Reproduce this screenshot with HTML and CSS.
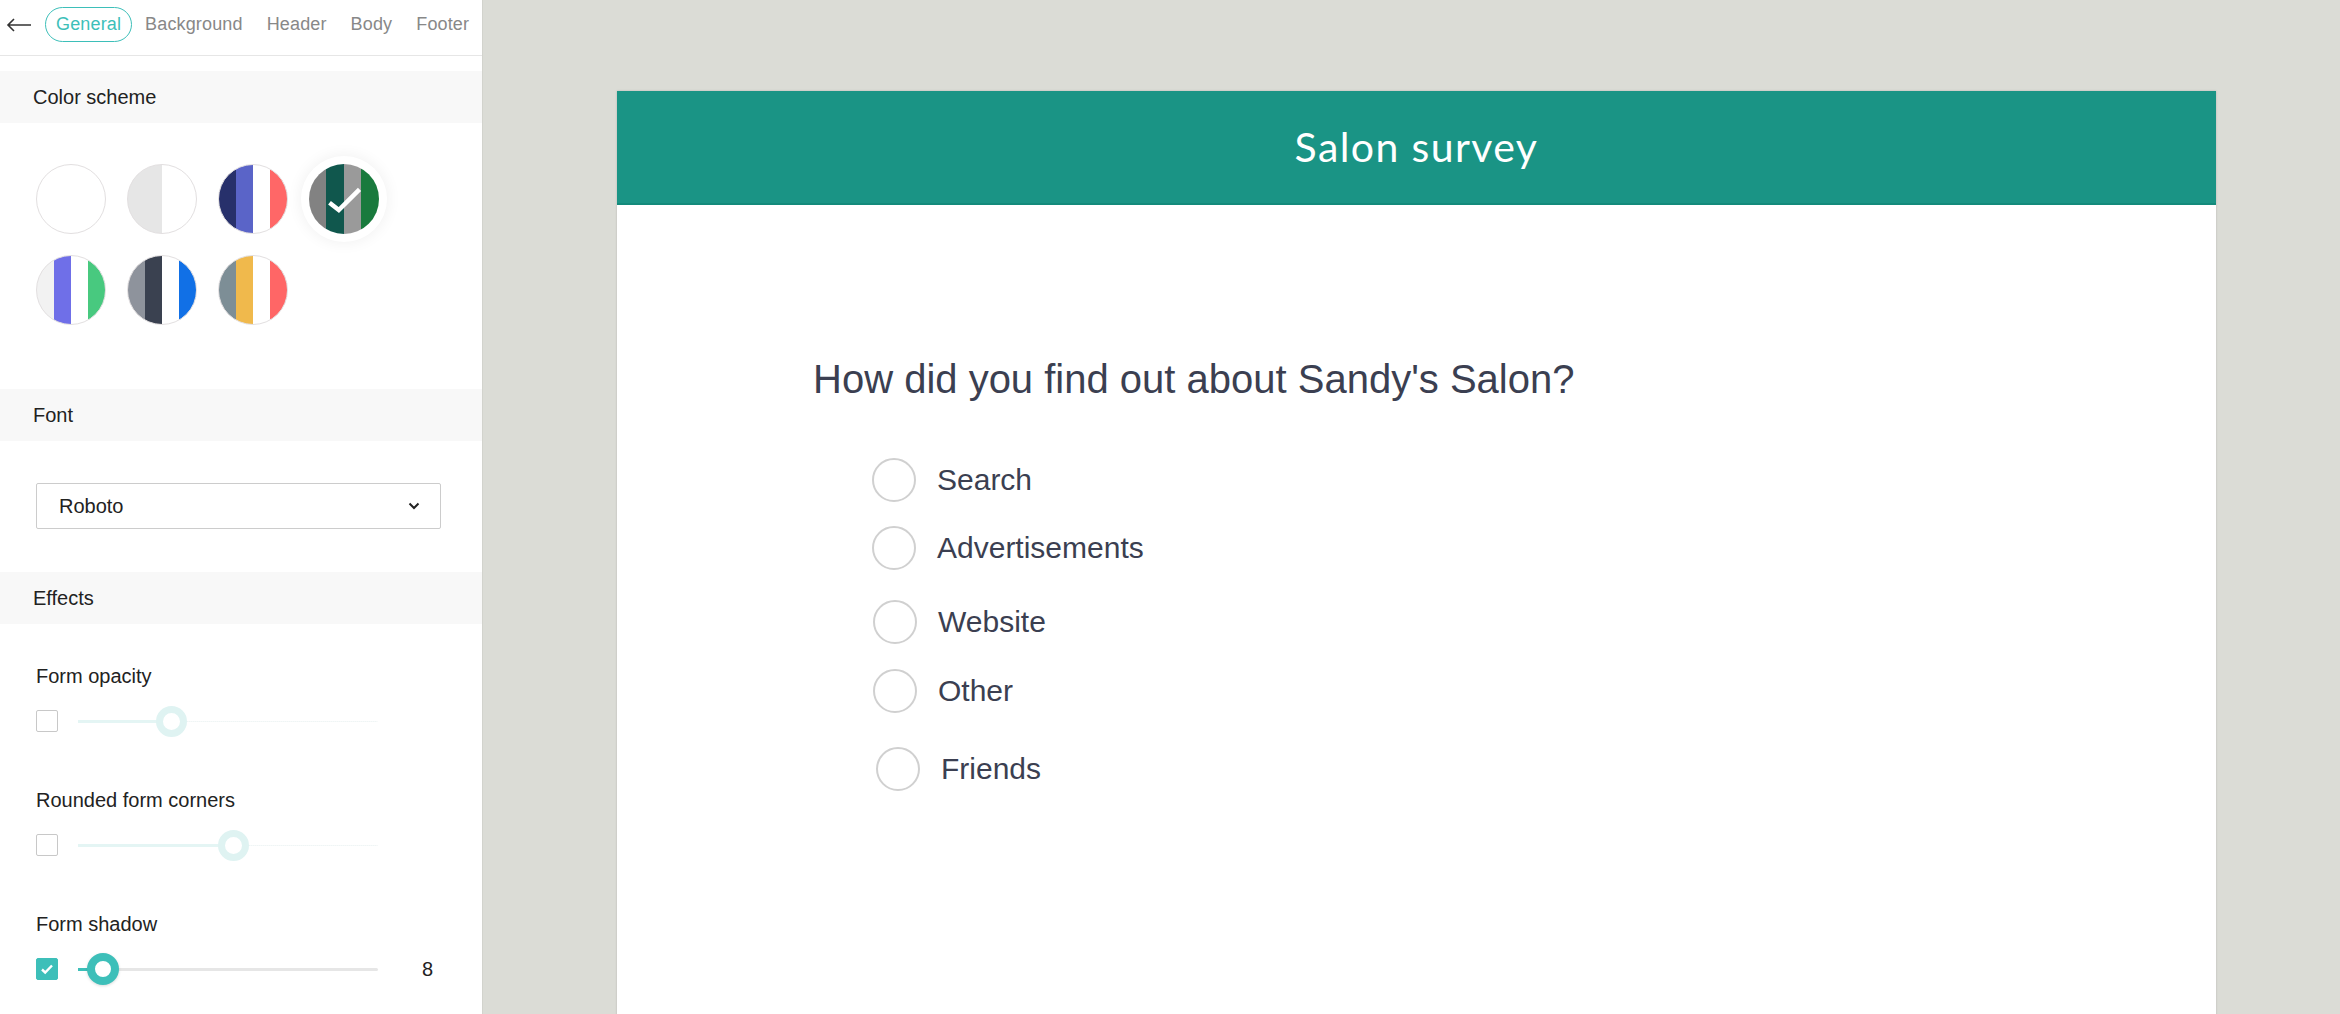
FILE: index.html
```html
<!DOCTYPE html>
<html lang="en">
<head>
    <meta charset="UTF-8">
    <meta name="viewport" content="width=device-width, initial-scale=1.0">
    <title>Salon survey | Form designer</title>
    <link rel="stylesheet" href="styles.css">
</head>
<body>
    <div class="app">
        <aside class="sidebar">
            <nav class="tabs">
                <a href="#" class="back">
                    <svg width="26" height="14" viewBox="0 0 26 14">
                        <path d="M25 7H2M8 1L2 7l6 6" fill="none" stroke="#333" stroke-width="1.6"/>
                    </svg>
                </a>
                <a href="#" class="tab active">General</a>
                <a href="#" class="tab">Background</a>
                <a href="#" class="tab">Header</a>
                <a href="#" class="tab">Body</a>
                <a href="#" class="tab">Footer</a>
            </nav>

            <div class="section-title first">Color scheme</div>
            <div class="schemes">
                <span class="scheme s-white"></span>
                <span class="scheme s-grey"></span>
                <span class="scheme s-navy"></span>
                <span class="scheme s-forest selected">
                    <svg width="70" height="70" viewBox="0 0 70 70">
                        <path d="M20.5 38.7L29.8 46L50.5 25.3" fill="none" stroke="#fff" stroke-width="4.5"/>
                    </svg>
                </span>
                <span class="scheme s-mint"></span>
                <span class="scheme s-slate"></span>
                <span class="scheme s-sunset"></span>
            </div>

            <div class="section-title">Font</div>
            <div class="font-field">
                <div class="select">
                    <span>Roboto</span>
                    <svg width="12" height="8" viewBox="0 0 12 8">
                        <path d="M1.5 1.5L6 6l4.5-4.5" fill="none" stroke="#222" stroke-width="2"/>
                    </svg>
                </div>
            </div>

            <div class="section-title">Effects</div>
            <div class="effects">
                <div class="field">
                    <div class="field-label">Form opacity</div>
                    <div class="control">
                        <span class="checkbox"></span>
                        <div class="slider disabled">
                            <span class="fill" style="width: 31%"></span>
                            <span class="thumb" style="left: 31%"></span>
                        </div>
                    </div>
                </div>
                <div class="field">
                    <div class="field-label">Rounded form corners</div>
                    <div class="control">
                        <span class="checkbox"></span>
                        <div class="slider disabled">
                            <span class="fill" style="width: 51.7%"></span>
                            <span class="thumb" style="left: 51.7%"></span>
                        </div>
                    </div>
                </div>
                <div class="field">
                    <div class="field-label">Form shadow</div>
                    <div class="control">
                        <span class="checkbox checked">
                            <svg width="14" height="12" viewBox="0 0 14 12">
                                <path d="M2 6.5l3.2 3L12 2.5" fill="none" stroke="#fff" stroke-width="2.4"/>
                            </svg>
                        </span>
                        <div class="slider">
                            <span class="fill" style="width: 8.3%"></span>
                            <span class="thumb" style="left: 8.3%"></span>
                        </div>
                        <span class="slider-value">8</span>
                    </div>
                </div>
            </div>
        </aside>

        <main class="canvas">
            <div class="form-card">
                <header class="form-header">
                    <h1>Salon survey</h1>
                </header>
                <div class="form-body">
                    <h2 class="question">How did you find out about Sandy's Salon?</h2>
                    <ul class="options">
                        <li class="option"><span class="radio"></span><span>Search</span></li>
                        <li class="option"><span class="radio"></span><span>Advertisements</span></li>
                        <li class="option"><span class="radio"></span><span>Website</span></li>
                        <li class="option"><span class="radio"></span><span>Other</span></li>
                        <li class="option"><span class="radio"></span><span>Friends</span></li>
                    </ul>
                </div>
            </div>
        </main>
    </div>
</body>
</html>
```

FILE: styles.css
```css
:root {
    --teal: #3dbfb9;
    --teal-light: #dff3f2;
    --header: #1a9485;
    --canvas: #dbdcd6;
    --band: #f8f8f8;
    --text: #222222;
    --muted: #888888;
    --ink: #3b3f51;
    --border: #cccccc;
}

* {
    margin: 0;
    padding: 0;
    box-sizing: border-box;
}

body {
    font-family: 'Liberation Sans', Arial, sans-serif;
    color: var(--text);
    background-color: var(--canvas);
    overflow: hidden;
}

.app {
    display: flex;
    height: 1014px;
}

/* ---------- sidebar ---------- */

.sidebar {
    width: 483px;
    flex-shrink: 0;
    background-color: #fff;
    border-right: 1px solid #d2d3cd;
    overflow: hidden;
}

.tabs {
    display: flex;
    align-items: center;
    height: 56px;
    padding: 7px 0 13px 6px;
    border-bottom: 1px solid #e6e6e6;
}

.back {
    display: flex;
    align-items: center;
    width: 27px;
    height: 35px;
    margin-right: 12px;
}

.tab {
    height: 35px;
    padding: 0 12px;
    display: flex;
    align-items: center;
    font-size: 18px;
    letter-spacing: 0.15px;
    color: var(--muted);
    text-decoration: none;
    white-space: nowrap;
}

.tab.active {
    color: var(--teal);
    border: 1.5px solid var(--teal);
    border-radius: 18px;
    padding: 0 10px;
    margin-right: 1px;
}

.section-title {
    height: 52px;
    display: flex;
    align-items: center;
    padding-left: 33px;
    background-color: var(--band);
    font-size: 20px;
    color: var(--text);
}

.section-title.first {
    margin-top: 15px;
}

.schemes {
    display: grid;
    grid-template-columns: repeat(4, 70px);
    gap: 21px;
    padding: 41px 0 64px 36px;
}

.scheme {
    width: 70px;
    height: 70px;
    border-radius: 50%;
    border: 1px solid #e2dfe0;
    display: flex;
    align-items: center;
    justify-content: center;
}

.scheme.selected {
    border: none;
    box-shadow: 0 0 0 8px #fff, 0 0 14px 10px rgba(0, 0, 0, 0.05);
}

.s-white { background: #fff; }
.s-grey { background: linear-gradient(90deg, #e6e6e6 50%, #fff 50%); }
.s-navy { background: linear-gradient(90deg, #27306b 25%, #5a64c8 25%, #5a64c8 50%, #fff 50%, #fff 75%, #ff6767 75%); }
.s-forest { background: linear-gradient(90deg, #828282 25%, #10574d 25%, #10574d 50%, #9a9a9a 50%, #9a9a9a 75%, #197a3d 75%); }
.s-mint { background: linear-gradient(90deg, #f2f2f2 25%, #6f6fe8 25%, #6f6fe8 50%, #fff 50%, #fff 75%, #48c97f 75%); }
.s-slate { background: linear-gradient(90deg, #8e939c 25%, #3a4150 25%, #3a4150 50%, #fff 50%, #fff 75%, #1170e6 75%); }
.s-sunset { background: linear-gradient(90deg, #7d8e96 25%, #f0b94c 25%, #f0b94c 50%, #fff 50%, #fff 75%, #ff6666 75%); }

.font-field {
    padding: 42px 41px 43px 36px;
}

.select {
    height: 46px;
    border: 1px solid var(--border);
    border-radius: 2px;
    display: flex;
    align-items: center;
    justify-content: space-between;
    padding: 0 20px 0 22px;
    font-size: 20px;
}

.effects {
    padding: 40px 0 0 36px;
}

.field {
    margin-bottom: 51px;
}

.field-label {
    font-size: 20px;
    line-height: 24px;
    margin-bottom: 17px;
}

.control {
    display: flex;
    align-items: center;
    height: 32px;
}

.checkbox {
    width: 22px;
    height: 22px;
    border: 1px solid #c8c8c8;
    border-radius: 2px;
    display: flex;
    align-items: center;
    justify-content: center;
    margin-right: 20px;
}

.checkbox.checked {
    background-color: var(--teal);
    border-color: var(--teal);
}

.slider {
    position: relative;
    width: 300px;
    height: 3px;
    background-color: #e6e6e6;
    border-radius: 2px;
}

.slider .fill {
    position: absolute;
    left: 0;
    top: 0;
    height: 3px;
    background-color: var(--teal);
}

.slider .thumb {
    position: absolute;
    top: 50%;
    width: 32px;
    height: 32px;
    margin: -16px 0 0 -16px;
    border-radius: 50%;
    background-color: #fff;
    border: 8px solid var(--teal);
    box-shadow: 0 1px 3px rgba(0, 0, 0, 0.15);
}

.slider.disabled {
    background: none;
    border-top: 1px dotted #eef4f4;
    height: 1px;
}

.slider.disabled .fill {
    top: -2px;
    background-color: #e4f5f4;
}

.slider.disabled .thumb {
    width: 31px;
    height: 31px;
    margin: -16px 0 0 -15px;
    border: 7px solid var(--teal-light);
    box-shadow: none;
}

.slider-value {
    margin-left: 44px;
    font-size: 20px;
}

/* ---------- form preview ---------- */

.canvas {
    flex: 1;
    padding: 91px 0 0 134px;
    overflow: hidden;
}

.form-card {
    width: 1599px;
    height: 1000px;
    background-color: #fff;
    box-shadow: 0 0 2px rgba(0, 0, 0, 0.18);
}

.form-header {
    height: 114px;
    background-color: var(--header);
    border-bottom: 2px solid #138a7b;
    display: flex;
    align-items: center;
    justify-content: center;
    padding-bottom: 2px;
}

.form-header h1 {
    font-family: Lato, 'Open Sans', sans-serif;
    font-weight: 400;
    font-size: 41px;
    color: #fff;
    letter-spacing: 1.4px;
}

.form-body {
    padding: 150px 0 0 196px;
    color: var(--ink);
}

.question {
    font-size: 40px;
    font-weight: normal;
    line-height: 48px;
    margin-bottom: 55px;
}

.options {
    list-style: none;
    padding-left: 59px;
}

.option {
    display: flex;
    align-items: center;
    gap: 21px;
    height: 44px;
    font-size: 30px;
}

.option:nth-child(2) { margin-top: 24px; }
.option:nth-child(3) { margin-top: 30px; padding-left: 1px; }
.option:nth-child(4) { margin-top: 25px; padding-left: 1px; }
.option:nth-child(5) { margin-top: 34px; padding-left: 4px; }

.radio {
    width: 44px;
    height: 44px;
    border-radius: 50%;
    border: 2px solid #d0d0d0;
}
```
